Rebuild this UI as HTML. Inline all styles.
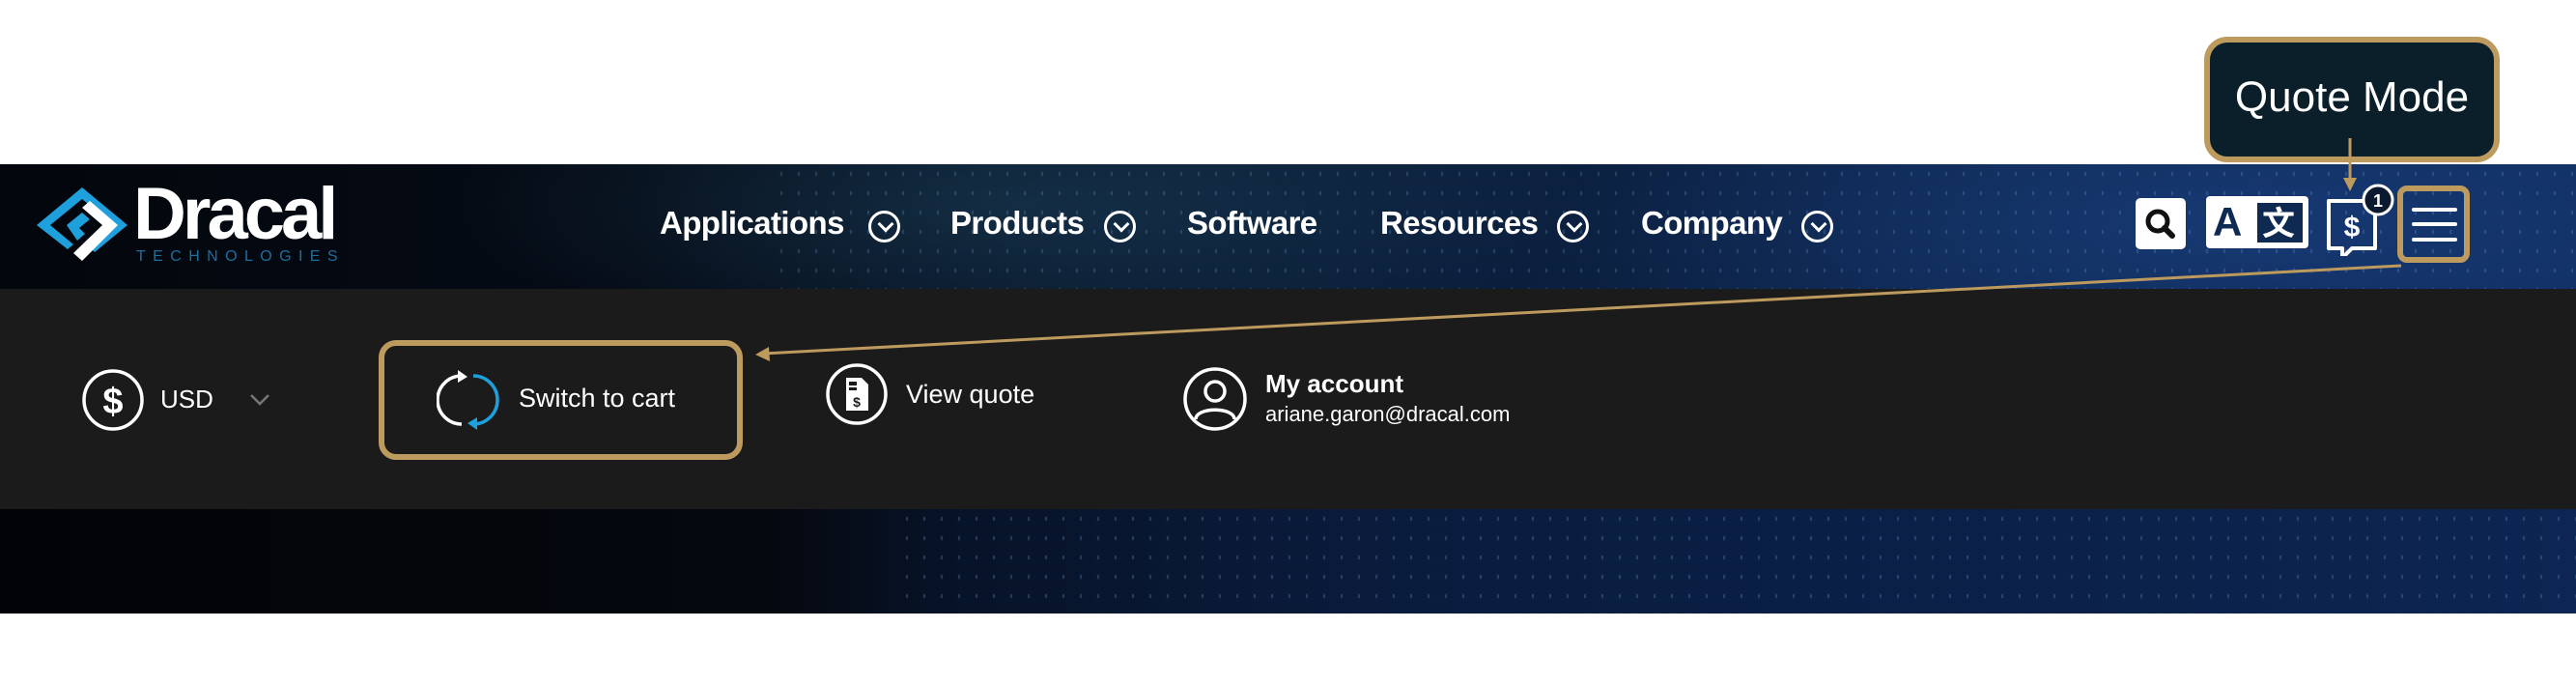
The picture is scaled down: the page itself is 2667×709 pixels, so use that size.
<!DOCTYPE html>
<html><head><meta charset="utf-8"><style>
*{margin:0;padding:0;box-sizing:border-box}
body{width:2667px;height:709px;background:#fff;position:relative;overflow:hidden;font-family:"Liberation Sans",Arial,sans-serif}
.abs{position:absolute}
#hdr{left:0;top:170px;width:2667px;height:129px;background:
radial-gradient(ellipse 700px 200px at 2300px 60px,rgba(30,70,140,.55),transparent),
radial-gradient(ellipse 600px 160px at 1050px 40px,rgba(40,90,120,.35),transparent),
linear-gradient(90deg,#03060c 0%,#050b16 25%,#0a1a30 45%,#0c2347 70%,#0f2d5e 100%)}
#dots1,#dots2{background-image:radial-gradient(ellipse 1.5px 3px,rgba(120,170,230,.45) 60%,transparent 100%);background-size:18px 20px}
#panel{left:0;top:299px;width:2667px;height:228px;background:#1b1b1b}
#band{left:0;top:527px;width:2667px;height:108px;background:linear-gradient(90deg,#020307 0%,#05080f 30%,#071226 36%,#0a1c3e 55%,#0b2149 80%,#0c2552 100%)}
.nav{color:#fff;font-weight:bold;font-size:33px;top:212px;letter-spacing:-.6px}
.chev{width:33px;height:33px;border:3px solid #fff;border-radius:50%;top:218px}
.chev:after{content:"";position:absolute;left:9px;top:5px;width:9px;height:9px;border-right:3px solid #fff;border-bottom:3px solid #fff;transform:rotate(45deg)}
.t{color:#fff;font-size:26px}
.gold{border:6px solid #bd9a5d}
</style></head><body>
<div id="hdr" class="abs"></div>
<div id="dots1" class="abs" style="left:800px;top:170px;width:1867px;height:129px;opacity:.5"></div>
<div id="panel" class="abs"></div>
<div id="band" class="abs"></div>
<div id="dots2" class="abs" style="left:930px;top:527px;width:1737px;height:108px;opacity:.55"></div>

<!-- logo -->
<svg class="abs" style="left:36px;top:192px" width="98" height="82" viewBox="0 0 98 82">
<path d="M49 2 L96 41 L62 69 L54 62 L82 41 L49 14 L16 41 L40 61 L34 66 L2 41 Z" fill="#1ea0dc"/>
<path d="M57 16 L86 41 L49 78 L40 70 L70 41 L49 23 Z" fill="#fff"/>
<path d="M33 41 L49 28 L57 35 L46 44 L52 50 L44 57 Z" fill="#1ea0dc"/>
</svg>
<div class="abs" style="left:138px;top:182px;color:#fff;font-size:76px;font-weight:bold;letter-spacing:-4px;line-height:80px">Dracal</div>
<div class="abs" style="left:141px;top:258px;color:#1e6f9c;font-size:16px;letter-spacing:7.4px;line-height:16px">TECHNOLOGIES</div>

<!-- nav -->
<div class="abs nav" style="left:683px">Applications</div><div class="abs chev" style="left:899px"></div>
<div class="abs nav" style="left:984px">Products</div><div class="abs chev" style="left:1143px"></div>
<div class="abs nav" style="left:1229px">Software</div>
<div class="abs nav" style="left:1429px">Resources</div><div class="abs chev" style="left:1612px"></div>
<div class="abs nav" style="left:1699px">Company</div><div class="abs chev" style="left:1865px"></div>

<!-- right icons -->
<div class="abs" style="left:2211px;top:205px;width:52px;height:53px;background:#fff;border-radius:5px"></div>
<svg class="abs" style="left:2211px;top:205px" width="52" height="53"><circle cx="23" cy="24" r="10" fill="none" stroke="#111" stroke-width="5"/><line x1="30" y1="31" x2="38" y2="39" stroke="#111" stroke-width="6" stroke-linecap="round"/></svg>
<div class="abs" style="left:2284px;top:203px;width:106px;height:54px;background:#fff;border-radius:4px"></div>
<div class="abs" style="left:2337px;top:210px;width:47px;height:41px;background:#0e2a52"></div>
<div class="abs" style="left:2291px;top:203px;font-size:42px;font-weight:bold;color:#0e2a52;line-height:54px">A</div>
<div class="abs" style="left:2342px;top:206px;font-size:34px;font-weight:bold;color:#fff;line-height:46px;font-family:'Noto Sans CJK SC',sans-serif">文</div>
<svg class="abs" style="left:2405px;top:185px" width="80" height="80"><path d="M6 23 H54 V72 H30 L20 82 V72 H6 Z" fill="none" stroke="#fff" stroke-width="4" stroke-linejoin="round"/><text x="30" y="60" text-anchor="middle" fill="#fff" font-size="30" font-weight="bold" font-family="Liberation Sans">$</text><circle cx="57" cy="22" r="15" fill="#0b1a2e" stroke="#fff" stroke-width="3"/><text x="57" y="29" text-anchor="middle" fill="#fff" font-size="18" font-weight="bold" font-family="Liberation Sans">1</text></svg>
<div class="abs gold" style="left:2482px;top:192px;width:75px;height:80px;border-radius:10px"></div>
<div class="abs" style="left:2497px;top:215px;width:47px;height:4px;background:#fff;border-radius:2px"></div>
<div class="abs" style="left:2497px;top:230px;width:47px;height:4px;background:#fff;border-radius:2px"></div>
<div class="abs" style="left:2497px;top:246px;width:47px;height:4px;background:#fff;border-radius:2px"></div>

<!-- quote mode callout -->
<div class="abs gold" style="left:2282px;top:38px;width:306px;height:130px;border-radius:24px;background:#0a1f2a"></div>
<div class="abs" style="left:2282px;top:76px;width:306px;text-align:center;color:#fff;font-size:44px;line-height:50px">Quote Mode</div>
<svg class="abs" style="left:0;top:0" width="2667" height="709">
<line x1="2433" y1="143" x2="2433" y2="186" stroke="#bd9a5d" stroke-width="3"/>
<polygon points="2426,184 2440,184 2433,198" fill="#bd9a5d"/>
<line x1="2486" y1="275" x2="790" y2="366" stroke="#bd9a5d" stroke-width="3"/>
<polygon points="782,367 796,359 797,374" fill="#bd9a5d"/>
</svg>

<!-- panel items -->
<svg class="abs" style="left:84px;top:381px" width="66" height="66"><circle cx="33" cy="33" r="30" fill="none" stroke="#fff" stroke-width="3.5"/><text x="33" y="47" text-anchor="middle" fill="#fff" font-size="38" font-weight="bold" font-family="Liberation Sans">$</text></svg>
<div class="abs t" style="left:166px;top:398px">USD</div>
<svg class="abs" style="left:258px;top:407px" width="22" height="14"><path d="M2 2 L11 11 L20 2" fill="none" stroke="#777" stroke-width="2.5"/></svg>

<div class="abs gold" style="left:392px;top:352px;width:377px;height:124px;border-radius:18px"></div>
<svg class="abs" style="left:452px;top:380px" width="66" height="68"><path d="M26 9 A25 25 0 0 0 26 59" fill="none" stroke="#fff" stroke-width="3.5"/><polygon points="22,3 32,10 22,16" fill="#fff"/><path d="M38 9 A25 25 0 0 1 38 59" fill="none" stroke="#1ea0dc" stroke-width="3.5"/><polygon points="42,52 32,58 42,65" fill="#1ea0dc"/></svg>
<div class="abs t" style="left:537px;top:397px;font-size:27px">Switch to cart</div>

<svg class="abs" style="left:854px;top:375px" width="66" height="66"><circle cx="33" cy="33" r="30" fill="none" stroke="#fff" stroke-width="3.5"/><path d="M22 16 H38 L45 23 V50 H22 Z" fill="#fff"/><rect x="25" y="20" width="8" height="4" fill="#1b1b1b"/><rect x="25" y="26" width="8" height="3" fill="#1b1b1b"/><text x="33" y="46" text-anchor="middle" fill="#1b1b1b" font-size="14" font-weight="bold" font-family="Liberation Sans">$</text></svg>
<div class="abs t" style="left:938px;top:393px;font-size:27px">View quote</div>

<svg class="abs" style="left:1224px;top:379px" width="68" height="68"><circle cx="34" cy="34" r="31" fill="none" stroke="#fff" stroke-width="3.5"/><circle cx="34" cy="26" r="10" fill="none" stroke="#fff" stroke-width="3.5"/><path d="M14 55 C14 42 54 42 54 55" fill="none" stroke="#fff" stroke-width="3.5"/></svg>
<div class="abs t" style="left:1310px;top:382px;font-weight:bold;font-size:26px">My account</div>
<div class="abs t" style="left:1310px;top:416px;font-size:22px">ariane.garon@dracal.com</div>
</body></html>
